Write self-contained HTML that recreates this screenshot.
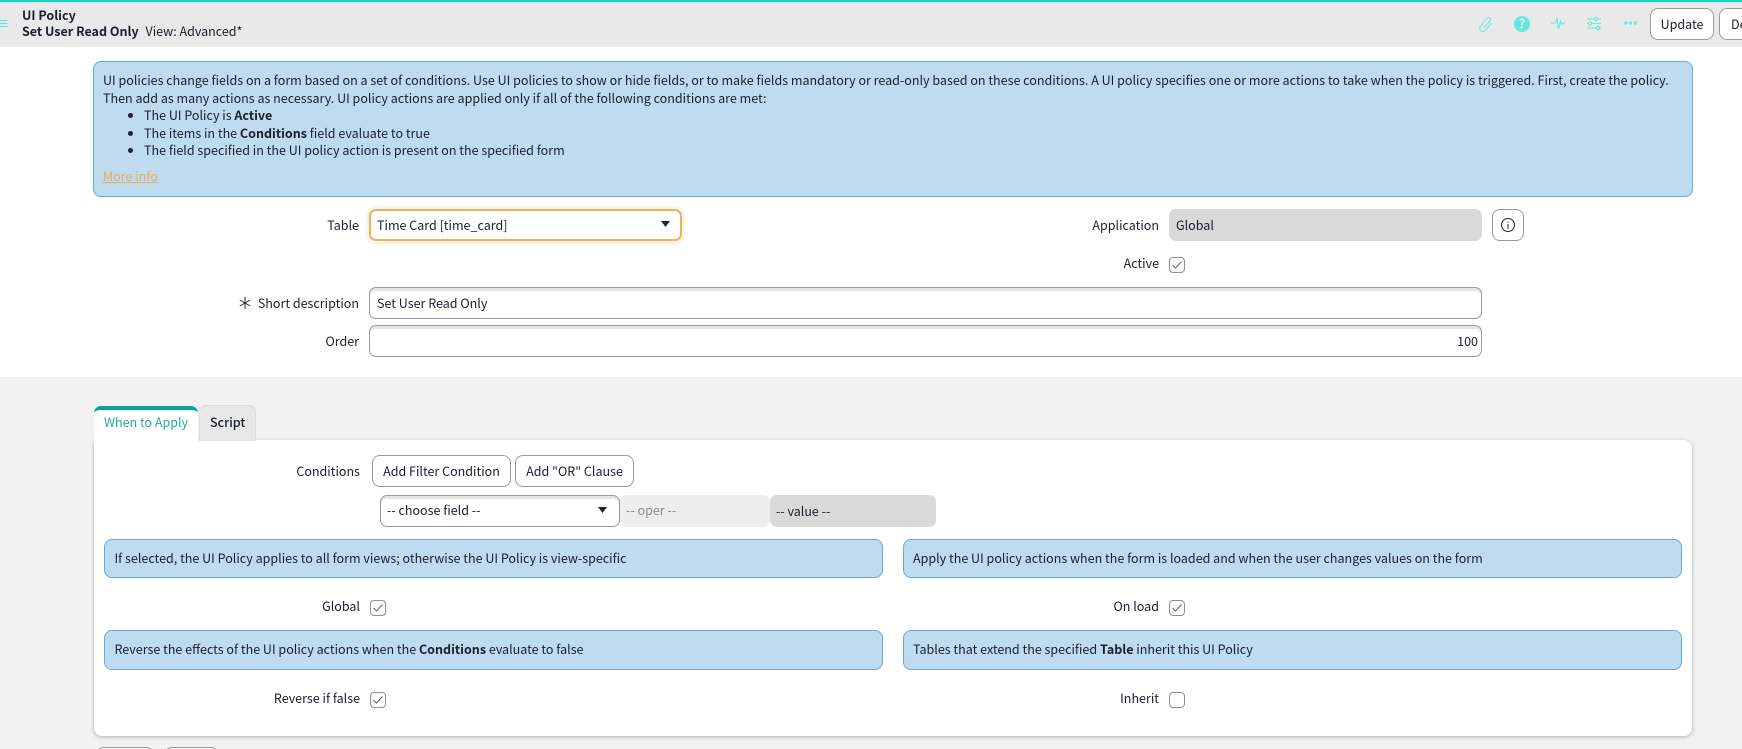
<!DOCTYPE html>
<html><head><meta charset="utf-8"><title>UI Policy</title>
<style>
html,body{margin:0;padding:0;width:1742px;height:749px;overflow:hidden;background:#fff}
body{position:relative;font-family:"Noto Sans CJK JP","Liberation Sans",sans-serif;font-size:12.52px;color:#1a1f2e}
.t,.b{position:absolute;box-sizing:border-box}
.t{white-space:nowrap;line-height:18px}
.r{text-align:right}
.i{border:1px solid #9a9aa6;border-radius:7px;background:#fff;box-shadow:inset 0 3px 0 #e6e6e6}
.n{background:#bfdbf0;border:1px solid #68a8dc;border-radius:8px}
.c{width:16px;height:16px;border:1px solid #8f8f9b;border-radius:4px;background:#fff}
.btn{border:1px solid #9a9aa6;border-radius:8px;background:#fff;text-align:center;white-space:nowrap}
b{font-weight:700}
svg{position:absolute;overflow:visible}
</style></head><body>
<div class="b" style="left:0;top:0;width:1742px;height:47px;background:#e9e9e9"></div>
<div class="b" style="left:0;top:0;width:1742px;height:2px;background:#0fd9c5"></div>
<svg style="left:0;top:20px" width="8" height="8"><path d="M0 .5H7.500M0 3.500H7.500M0 6.500H7.500" stroke="#52e8d8" fill="none"/></svg>
<div class="t" style="left:22px;top:6px"><b>UI Policy</b></div>
<div class="t" style="left:22px;top:22px"><b>Set User Read Only</b></div>
<div class="t" style="left:145.500px;top:22px">View: Advanced*</div>

<svg style="left:1479px;top:17px" width="14" height="15" fill="none" stroke="#6ceee0" stroke-width="1.100"><g transform="translate(3.750 -1) rotate(40 3.250 8.500)"><path d="M6.500 4V13.500A3.250 3.250 0 0 1 0 13.500V3A2 2 0 0 1 4 3V12"/></g></svg>
<svg style="left:1514px;top:16px" width="16" height="16"><circle cx="8" cy="8" r="8" fill="#63ecdd"/><text x="8" y="12.500" text-anchor="middle" font-size="12.500" font-weight="700" fill="#e9e9e9" font-family="Noto Sans CJK JP, sans-serif">?</text></svg>
<svg style="left:1551px;top:16px" width="15" height="14" fill="none" stroke="#63ecdd" stroke-width="1.100"><path d="M0 7H4.500L6 2 7.500 13 9.500 5 10.500 8 14.500 6.500"/></svg>
<svg style="left:1587px;top:17px" width="15" height="13" fill="none" stroke="#63ecdd" stroke-width="1.100"><path d="M0 2H14M0 6.500H14M0 11H14"/><circle cx="9" cy="2" r="1.600" fill="#e9e9e9"/><circle cx="3" cy="6.500" r="1.600" fill="#e9e9e9"/><circle cx="11" cy="11" r="1.600" fill="#e9e9e9"/></svg>
<svg style="left:1624px;top:21px" width="13" height="4" fill="#63ecdd"><circle cx="1.800" cy="2" r="1.700"/><circle cx="6.500" cy="2" r="1.700"/><circle cx="11.200" cy="2" r="1.700"/></svg>
<div class="b btn" style="left:1650px;top:8px;width:64px;height:32px;line-height:30px">Update</div>
<div class="b btn" style="left:1719px;top:8px;width:60px;height:32px;line-height:30px;text-align:left;padding-left:11px">Delete</div>

<div class="b n" style="left:93px;top:61px;width:1600px;height:136px"></div>
<div class="t" style="left:103px;top:71px">UI policies change fields on a form based on a set of conditions. Use UI policies to show or hide fields, or to make fields mandatory or read-only based on these conditions. A UI policy specifies one or more actions to take when the policy is triggered. First, create the policy.</div>
<div class="t" style="left:103px;top:89px">Then add as many actions as necessary. UI policy actions are applied only if all of the following conditions are met:</div>
<div class="b" style="left:128px;top:113px;width:5px;height:5px;border-radius:50%;background:#1e2433"></div>
<div class="b" style="left:128px;top:131px;width:5px;height:5px;border-radius:50%;background:#1e2433"></div>
<div class="b" style="left:128px;top:148px;width:5px;height:5px;border-radius:50%;background:#1e2433"></div>
<div class="t" style="left:144px;top:106px">The UI Policy is <b>Active</b></div>
<div class="t" style="left:144px;top:124px">The items in the <b>Conditions</b> field evaluate to true</div>
<div class="t" style="left:144px;top:141px">The field specified in the UI policy action is present on the specified form</div>
<div class="t" style="left:103px;top:167px;color:#e8ad56;text-decoration:underline">More info</div>

<div class="t r" style="right:1383px;top:216px">Table</div>
<div class="b" style="left:369px;top:209px;width:313px;height:32px;border:2px solid #e9b25f;border-radius:7px;background:#fff;box-shadow:0 0 0 3px #fdf3e7"></div>
<div class="t" style="left:377px;top:216px">Time Card [time_card]</div>
<svg style="left:661px;top:221px" width="9" height="6"><path d="M0 0H9L4.500 6Z" fill="#1e2433"/></svg>
<div class="t r" style="right:1383px;top:294px">Short description</div>
<svg style="left:239px;top:297px" width="12" height="12" fill="none" stroke="#1e2433" stroke-width="1"><path d="M6 0V12M.8 3 11.200 9M.8 9 11.200 3"/></svg>
<div class="b i" style="left:369px;top:287px;width:1113px;height:32px"></div>
<div class="t" style="left:377px;top:294px">Set User Read Only</div>
<div class="t r" style="right:1383px;top:332px">Order</div>
<div class="b i" style="left:369px;top:325px;width:1113px;height:32px"></div>
<div class="t r" style="right:264px;top:332px">100</div>
<div class="t r" style="right:583px;top:216px">Application</div>
<div class="b" style="left:1169px;top:209px;width:313px;height:32px;background:#d9d9d9;border-radius:7px"></div>
<div class="t" style="left:1176px;top:216px">Global</div>
<div class="b btn" style="left:1492px;top:209px;width:32px;height:32px"></div>
<svg style="left:1501px;top:218px" width="14" height="14" fill="none" stroke="#1e2433"><circle cx="7" cy="7" r="6.500"/><path d="M7 6V11M7 3.500V4.800"/></svg>
<div class="t r" style="right:583px;top:254px">Active</div>
<div class="b c" style="left:1169px;top:257px"><svg style="left:2px;top:3px" width="10" height="8" fill="none" stroke="#5d6170"><path d="M.5 4 3.500 7 9.500 .5"/></svg></div>

<div class="b" style="left:0;top:377px;width:1742px;height:372px;background:#f2f2f2"></div>
<div class="b" style="left:94px;top:440px;width:1598px;height:296px;background:#fff;border-radius:0 8px 8px 8px;box-shadow:0 1px 4px rgba(0,0,0,.28)"></div>
<div class="b" style="left:199px;top:405px;width:57px;height:36px;background:#e8e8e8;border:1px solid #dcdcdc;border-bottom:0;border-radius:7px 7px 0 0"></div>
<div class="b" style="left:94px;top:406px;width:104px;height:36px;background:#fff;border-top:4px solid #07a596;border-radius:7px 7px 0 0"></div>
<div class="t" style="left:104px;top:413px;color:#23a99c">When to Apply</div>
<div class="t" style="left:210px;top:413px"><b style="font-weight:500">Script</b></div>

<div class="t r" style="right:1382px;top:462px">Conditions</div>
<div class="b btn" style="left:372px;top:455px;width:139px;height:32px;line-height:30px">Add Filter Condition</div>
<div class="b btn" style="left:515px;top:455px;width:119px;height:32px;line-height:30px">Add "OR" Clause</div>
<div class="b i" style="left:380px;top:495px;width:240px;height:32px"></div>
<div class="t" style="left:387px;top:501px">-- choose field --</div>
<svg style="left:598px;top:507px" width="9" height="6"><path d="M0 0H9L4.500 6Z" fill="#1e2433"/></svg>
<div class="b" style="left:620px;top:495px;width:150px;height:32px;background:#eeeeee;border-radius:7px"></div>
<div class="t" style="left:626px;top:501px;color:#8a8a8a">-- oper --</div>
<div class="b" style="left:770px;top:495px;width:166px;height:32px;background:#d9d9d9;border-radius:7px"></div>
<div class="t" style="left:776px;top:502px">-- value --</div>

<div class="b n" style="left:104px;top:539px;width:779px;height:39px"></div>
<div class="t" style="left:114.500px;top:549px">If selected, the UI Policy applies to all form views; otherwise the UI Policy is view-specific</div>
<div class="b n" style="left:903px;top:539px;width:779px;height:39px"></div>
<div class="t" style="left:913px;top:549px">Apply the UI policy actions when the form is loaded and when the user changes values on the form</div>
<div class="t r" style="right:1382px;top:597px">Global</div>
<div class="b c" style="left:370px;top:600px"><svg style="left:2px;top:3px" width="10" height="8" fill="none" stroke="#5d6170"><path d="M.5 4 3.500 7 9.500 .5"/></svg></div>
<div class="t r" style="right:583px;top:597px">On load</div>
<div class="b c" style="left:1169px;top:600px"><svg style="left:2px;top:3px" width="10" height="8" fill="none" stroke="#5d6170"><path d="M.5 4 3.500 7 9.500 .5"/></svg></div>

<div class="b n" style="left:104px;top:630px;width:779px;height:40px"></div>
<div class="t" style="left:114.500px;top:640px">Reverse the effects of the UI policy actions when the <b>Conditions</b> evaluate to false</div>
<div class="b n" style="left:903px;top:630px;width:779px;height:40px"></div>
<div class="t" style="left:913px;top:640px">Tables that extend the specified <b>Table</b> inherit this UI Policy</div>
<div class="t r" style="right:1382px;top:689px">Reverse if false</div>
<div class="b c" style="left:370px;top:692px"><svg style="left:2px;top:3px" width="10" height="8" fill="none" stroke="#5d6170"><path d="M.5 4 3.500 7 9.500 .5"/></svg></div>
<div class="t r" style="right:583px;top:689px">Inherit</div>
<div class="b c" style="left:1169px;top:692px"></div>

<div class="b btn" style="left:96px;top:747px;width:58px;height:32px;border-color:#999"></div>
<div class="b btn" style="left:164px;top:747px;width:55px;height:32px;border-color:#999"></div>
</body></html>
